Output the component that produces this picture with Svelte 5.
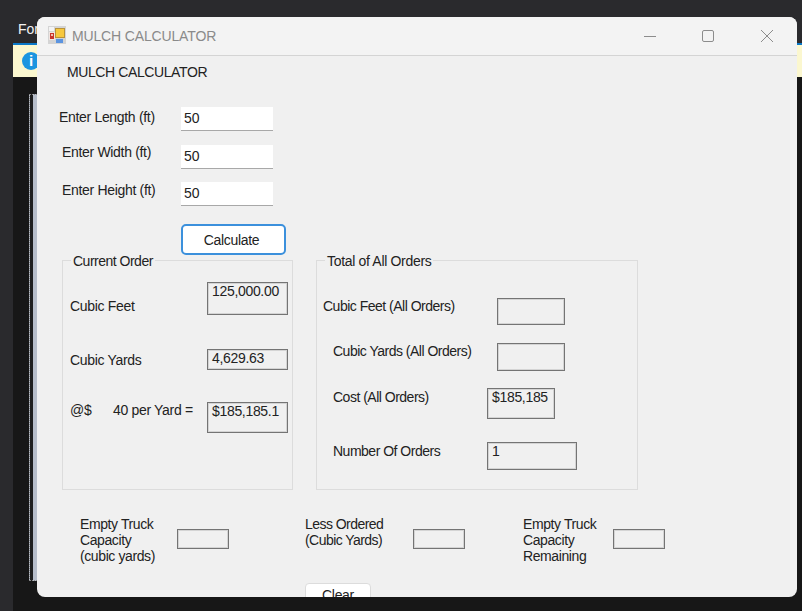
<script>
  const inputs = [
    { label: 'Enter Length (ft)', cls: 'r1' },
    { label: 'Enter Width (ft)', cls: 'r2' },
    { label: 'Enter Height (ft)', cls: 'r3' }
  ];
</script>

<div class="desk">
  <div class="tabstrip"><span class="tab">Form1.cs</span></div>
  <div class="workspace">
    <div class="infobar"><span class="info">i</span></div>
    <div class="editor"><div class="designer"></div></div>
  </div>

  <section class="window">
    <header class="titlebar">
      <svg class="appicon" width="18" height="18" viewBox="0 0 18 18">
        <rect x="0" y="0" width="18" height="18" fill="#d4d4d4"/>
        <rect x="1" y="1" width="5" height="4" fill="#f4f4f4"/>
        <rect x="7.5" y="2.5" width="9" height="9" fill="#f7c83e" stroke="#b8923a" stroke-width="1"/>
        <rect x="1.5" y="6.5" width="5" height="7" fill="#c9342c" stroke="#f0e4e0" stroke-width="1"/>
        <rect x="3" y="8" width="2" height="2" fill="#f0c0b0"/>
        <rect x="8" y="13" width="7" height="4" fill="#5b94e0"/>
      </svg>
      <span class="title">MULCH CALCULATOR</span>
      <div class="controls">
        <svg width="12" height="12" viewBox="0 0 12 12"><path d="M0 6.5h12" stroke="#8c8c8c" fill="none"/></svg>
        <svg width="12" height="12" viewBox="0 0 12 12"><rect x="0.5" y="0.5" width="11" height="11" rx="1.5" stroke="#8c8c8c" fill="none"/></svg>
        <svg width="14" height="14" viewBox="0 0 14 14"><path d="M1 1l12 12M13 1L1 13" stroke="#8c8c8c" fill="none"/></svg>
      </div>
    </header>

    <div class="form">
      <h1>MULCH CALCULATOR</h1>

      <div class="inputs">
        {#each inputs as i}
          <div class="inrow {i.cls}">
            <label for={i.cls}>{i.label}</label>
            <input id={i.cls} value="50" />
          </div>
        {/each}
      </div>

      <button class="calc">Calculate</button>

      <div class="groups">
        <fieldset class="g1">
          <legend>Current Order</legend>
          <div class="row a1"><span class="lab">Cubic Feet</span><span class="box b1">125,000.00</span></div>
          <div class="row a2"><span class="lab">Cubic Yards</span><span class="box b2">4,629.63</span></div>
          <div class="row a3"><span class="lab"><span class="at">@$</span>40 per Yard =</span><span class="box b3">$185,185.1</span></div>
        </fieldset>
        <fieldset class="g2">
          <legend>Total of All Orders</legend>
          <div class="row t1"><span class="lab">Cubic Feet (All Orders)</span><span class="box c1"></span></div>
          <div class="row t2"><span class="lab">Cubic Yards (All Orders)</span><span class="box c2"></span></div>
          <div class="row t3"><span class="lab">Cost (All Orders)</span><span class="box c3">$185,185</span></div>
          <div class="row t4"><span class="lab">Number Of Orders</span><span class="box c4">1</span></div>
        </fieldset>
      </div>

      <div class="bottom">
        <div class="trio s1"><span class="multi">Empty Truck<br />Capacity<br />(cubic yards)</span><span class="box small"></span></div>
        <div class="trio s2"><span class="multi">Less Ordered<br />(Cubic Yards)</span><span class="box small"></span></div>
        <div class="trio s3"><span class="multi">Empty Truck<br />Capacity<br />Remaining</span><span class="box small"></span></div>
      </div>

      <button class="clear">Clear</button>
    </div>
  </section>
</div>

<style>
  :global(body) { margin: 0; }
  .desk {
    position: relative;
    width: 802px;
    height: 611px;
    overflow: hidden;
    background: #2a2a2d;
    display: flex;
    flex-direction: column;
    font-family: "Liberation Sans", Arial, sans-serif;
  }
  .tabstrip { height: 43px; flex: none; padding: 19px 0 0 18px; box-sizing: border-box; }
  .tab { color: #f2f2f2; font-size: 14px; line-height: 20px; }
  .workspace {
    flex: 1;
    margin-left: 13px;
    border-top: 2px solid #0a78c8;
    background: #171717;
    display: flex;
    flex-direction: column;
  }
  .infobar {
    height: 32px;
    flex: none;
    background: #fbf7cf;
    padding: 7px 0 0 9px;
    box-sizing: border-box;
  }
  .info {
    display: block;
    width: 18px;
    height: 18px;
    border-radius: 50%;
    background: #1b95e0;
    color: #fff;
    font: bold 15px/18px "Liberation Sans", sans-serif;
    text-align: center;
  }
  .editor { flex: 1; padding: 17px 0 0 16px; }
  .designer {
    width: 30px;
    height: 487px;
    box-sizing: border-box;
    border: 1px dotted #8a8a8a;
    background: linear-gradient(90deg, #1e1e1e 3px, #b6bdc9 3px);
  }

  .window {
    position: absolute;
    left: 37px;
    top: 17px;
    width: 760px;
    height: 580px;
    border-radius: 8px;
    overflow: hidden;
    background: #f0f0f0;
    color: #222;
    font-size: 14px;
    letter-spacing: -0.32px;
    display: flex;
    flex-direction: column;
  }
  .titlebar {
    height: 39px;
    flex: none;
    box-sizing: border-box;
    background: #f3f3f3;
    border-bottom: 1px solid #d4d4d4;
    display: flex;
    align-items: center;
    padding-left: 11px;
  }
  .appicon { margin-right: 6px; margin-top: -2px; }
  .title { color: #8a8a8a; font-size: 14px; letter-spacing: -0.15px; }
  .controls {
    margin-left: auto;
    display: flex;
    align-items: center;
    gap: 46px;
    padding-right: 23px;
  }

  .form { position: relative; flex: 1; min-height: 0; overflow: hidden; }
  h1 {
    margin: 7px 0 0 30px;
    font-size: 14px;
    font-weight: normal;
    line-height: 18px;
    letter-spacing: -0.4px;
  }
  .inputs { margin-top: 26px; }
  .inrow { display: flex; align-items: flex-start; height: 24px; }
  .inrow label { width: 122px; line-height: 20px; flex: none; }
  .inrow input {
    width: 92px;
    height: 24px;
    box-sizing: border-box;
    border: 0;
    border-bottom: 1px solid #a8a8a8;
    background: #fff;
    padding: 0 3px 2px;
    font: 14px "Liberation Sans", sans-serif;
    color: #222;
    outline: none;
  }
  .r1 { padding-left: 22px; }
  .r2 { padding-left: 25px; margin-top: 14px; }
  .r3 { padding-left: 25px; margin-top: 13px; }
  .r2 label, .r3 label { width: 119px; }
  .r2 label { margin-top: -3px; }
  .r3 label { margin-top: -2px; }
  .r1 label { margin-top: 0; }

  button {
    font: 14px "Liberation Sans", sans-serif;
    letter-spacing: -0.32px;
    color: #222;
    background: #fff;
    box-sizing: border-box;
    padding: 0;
  }
  .calc {
    display: block;
    margin: 18px 0 0 144px;
    width: 105px;
    height: 31px;
    border: 2px solid #3b90dc;
    border-radius: 5px;
    padding-right: 4px;
  }

  .groups { display: flex; gap: 23px; margin: -4px 0 0 25px; height: 239px; }
  fieldset {
    margin: 0;
    padding: 0;
    height: 239px;
    box-sizing: border-box;
    border: 1px solid #dcdcdc;
    min-width: 0;
  }
  legend { padding: 2px 2px 0; margin-left: 8px; line-height: 17px; font-size: 14px; letter-spacing: -0.5px; }
  .g2 legend { letter-spacing: -0.32px; }
  .g1 { width: 231px; }
  .g2 { width: 322px; }

  .row { display: flex; align-items: flex-start; }
  .lab { flex: none; line-height: 18px; }
  .box {
    display: block;
    flex: none;
    box-sizing: border-box;
    border: 1px solid #747474;
    box-shadow: inset 0 0 0 1px #d4d4d4;
    background: #f0f0f0;
    padding: 0 4px;
    line-height: 17px;
  }
  .g1 .row { padding-left: 7px; }
  .g1 .lab { width: 137px; }
  .a1 { margin-top: 12px; }
  .a1 .lab { margin-top: 15px; }
  .b1 { width: 81px; height: 33px; }
  .a2 { margin-top: 34px; }
  .a2 .lab { margin-top: 2px; }
  .b2 { width: 81px; height: 21px; }
  .a3 { margin-top: 32px; }
  .a3 .lab { margin-top: -1px; }
  .b3 { width: 81px; height: 31px; }
  .at { display: inline-block; width: 43px; }

  .g2 .row { padding-left: 16px; }
  .g2 .lab { letter-spacing: -0.5px; }
  .t1 { margin-top: 28px; }
  .g2 .t1 { padding-left: 6px; }
  .t1 .lab { width: 174px; margin-top: -1px; }
  .c1 { width: 68px; height: 27px; }
  .t2 { margin-top: 18px; }
  .t2 .lab { width: 164px; margin-top: -1px; }
  .c2 { width: 68px; height: 28px; }
  .t3 { margin-top: 17px; }
  .t3 .lab { width: 154px; }
  .c3 { width: 68px; height: 31px; }
  .t4 { margin-top: 23px; }
  .t4 .lab { width: 154px; }
  .c4 { width: 90px; height: 28px; }

  .bottom { display: flex; margin-top: 26px; }
  .trio { display: flex; align-items: flex-start; flex: none; }
  .multi { line-height: 16px; flex: none; letter-spacing: -0.4px; }
  .small { width: 52px; height: 20px; margin-top: 13px; }
  .s1 { margin-left: 43px; }
  .s1 .multi { width: 97px; }
  .s2 { margin-left: 76px; }
  .s2 .multi { width: 108px; letter-spacing: -0.55px; }
  .s3 { margin-left: 58px; }
  .s3 .multi { width: 90px; }

  .clear {
    display: block;
    margin: 19px 0 0 268px;
    width: 66px;
    height: 24px;
    border: 1px solid #dcdcdc;
    border-radius: 4px;
  }
</style>
